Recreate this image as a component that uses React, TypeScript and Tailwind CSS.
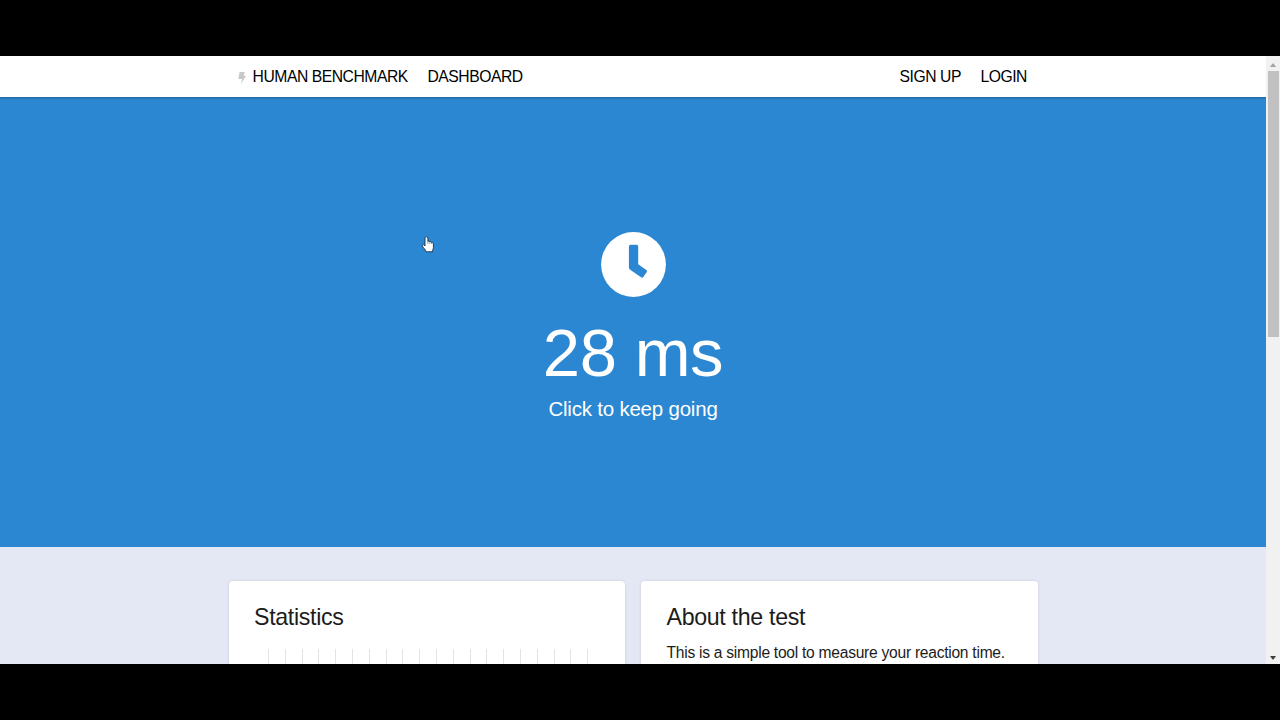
import React from 'react';

const GRID_LINES = Array.from({ length: 20 }, (_, i) => i);

const NavBar: React.FC = () => (
  <nav className="relative z-10 h-[41px] shrink-0 bg-white shadow-[0_1px_2px_rgba(0,0,0,0.3)]">
    <div className="mx-auto flex h-full w-[809px] justify-between pr-[10.5px] pl-[9.5px] text-[15.7px] leading-[41px] tracking-[-0.45px] text-black">
      <div className="flex">
        <a className="flex items-center">
          <svg viewBox="0 0 8 12" className="mt-[2px] mr-[6.5px] h-[12px] w-[8px] fill-[#c8c8c8]">
            <path d="M1.6 0H6.8L5.7 3.8H8L3 12L4.1 6.9H0.3Z" />
          </svg>
          <span>HUMAN BENCHMARK</span>
        </a>
        <a className="ml-[19.5px]">DASHBOARD</a>
      </div>
      <div className="flex gap-[19.5px]">
        <a>SIGN UP</a>
        <a>LOGIN</a>
      </div>
    </div>
  </nav>
);

const ClockIcon: React.FC = () => (
  <svg viewBox="0 0 67 67" className="size-[67px]">
    <circle cx="33.5" cy="33.5" r="32.4" fill="white" />
    <path
      d="M30.5 13.8H36.5Q38.2 13.8 38.2 15.5V33.2L46.3 39.1Q47.5 40 46.6 41.2L43.3 45.9Q42.4 47.2 41.1 46.3L30.2 38.8Q28.9 37.8 28.9 36.3V15.5Q28.9 13.8 30.5 13.8Z"
      fill="#2b87d1"
    />
  </svg>
);

const Result: React.FC = () => (
  <section className="flex h-[450px] shrink-0 flex-col items-center bg-[#2b87d1] pt-[134px] text-white">
    <ClockIcon />
    <h1 className="mt-[15px] text-[67px] leading-[80px] tracking-[-0.4px]">28 ms</h1>
    <p className="mt-[3px] text-[20.5px] leading-[25px] tracking-[-0.21px]">Click to keep going</p>
  </section>
);

const Card: React.FC<{ title: string; children: React.ReactNode }> = ({ title, children }) => (
  <div className="h-[300px] flex-1 rounded-[4px] bg-white px-[25.5px] pt-[21px] text-[#1c1c1c] shadow-[0_0_3px_rgba(0,0,0,0.12)]">
    <h2 className="text-[23.2px] leading-[30px] tracking-[-0.32px]">{title}</h2>
    {children}
  </div>
);

const ScrollBar: React.FC = () => (
  <div className="flex w-[14px] shrink-0 flex-col items-center bg-[#f1f1f1]">
    <svg viewBox="0 0 14 15" className="h-[15px] w-[14px] shrink-0 fill-[#a3a3a3]">
      <path d="M4 11L6.5 7.5H7.5L10 11Z" />
    </svg>
    <div className="h-[266px] w-[11px] shrink-0 bg-[#c1c1c1]" />
    <svg viewBox="0 0 14 14" className="mt-auto h-[14px] w-[14px] shrink-0 fill-[#404040]">
      <path d="M4 6L6.5 9.5H7.5L10 6Z" />
    </svg>
  </div>
);

// pointing-hand mouse cursor
const HandCursor: React.FC = () => (
  <svg viewBox="0 0 13 17" className="absolute top-[236px] left-[421px] z-20 h-[17px] w-[13px]">
    <path
      d="M4 10V2.1C4 0.4 6.9 0.4 6.9 2.1V5.4C7.4 4.9 8.6 5.1 8.8 5.9C9.4 5.5 10.4 5.8 10.6 6.6C11.4 6.3 12.4 6.9 12.4 8V11.5C12.4 13.4 11.5 14 11.3 15.8H5.2C4.7 13.8 2.5 12 1.4 10C0.7 8.2 2.6 7.9 4 10Z"
      fill="white"
      stroke="#16304a"
      strokeWidth="0.9"
    />
    <path d="M6.9 5.5V8M8.8 6V8M10.6 6.7V8" stroke="#16304a" strokeWidth="0.4" />
  </svg>
);

export default function App() {
  return (
    <div className="relative h-[720px] w-[1280px] overflow-hidden bg-black py-[56px] font-['Liberation_Sans',Arial,sans-serif]">
      <div className="flex h-[608px] overflow-hidden">
        <main className="flex min-w-0 flex-1 flex-col overflow-hidden bg-[#e4e8f4]">
          <NavBar />
          <Result />
          <div className="mx-auto mt-[34px] flex w-[809px] gap-[16px]">
            <Card title="Statistics">
              <div className="mt-[17px] ml-[14px] flex gap-[15.8px]">
                {GRID_LINES.map((line) => (
                  <div key={line} className="h-[200px] w-px shrink-0 bg-[#e3e3e3]" />
                ))}
              </div>
            </Card>
            <Card title="About the test">
              <p className="mt-[10px] text-[15.6px] leading-[22px] tracking-[-0.26px] whitespace-nowrap">
                This is a simple tool to measure your reaction time.
              </p>
            </Card>
          </div>
        </main>
        <ScrollBar />
      </div>
      <HandCursor />
    </div>
  );
}
